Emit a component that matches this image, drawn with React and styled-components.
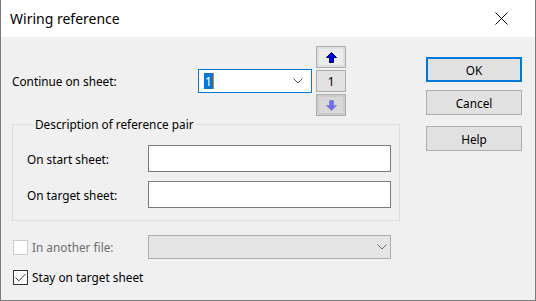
import React from "react";
import styled, { createGlobalStyle } from "styled-components";

const GlobalStyle = createGlobalStyle`
  html, body {
    margin: 0;
    padding: 0;
    background: #f0f0f0;
  }
  * {
    box-sizing: border-box;
  }
`;

const Window = styled.div`
  width: 536px;
  height: 301px;
  border: 1px solid #7a7a7a;
  border-top: none;
  display: flex;
  flex-direction: column;
  background: #f0f0f0;
  font-family: "Noto Sans", "Liberation Sans", sans-serif;
  font-size: 11.8px;
  color: #000;
`;

const TitleBar = styled.div`
  height: 37px;
  background: #fff;
  display: flex;
  align-items: center;
  justify-content: space-between;
  padding: 0 27px 0 9px;
  font-size: 14px;
  flex-shrink: 0;
`;

const CloseIcon = styled.svg`
  width: 13px;
  height: 13px;
`;

const Body = styled.div`
  flex: 1;
  display: flex;
  padding: 9px 13px 0 11px;
`;

const LeftColumn = styled.div`
  width: 388px;
  display: flex;
  flex-direction: column;
`;

const RightColumn = styled.div`
  margin-left: auto;
  padding-top: 11px;
  display: flex;
  flex-direction: column;
`;

const SheetRow = styled.div`
  display: flex;
  align-items: center;
  height: 70px;
`;

const Label = styled.span`
  width: ${(p) => p.width || "auto"};
  flex-shrink: 0;
  color: ${(p) => (p.disabled ? "#6d6d6d" : "#000")};
  white-space: nowrap;
`;

const Combo = styled.div`
  width: 114px;
  height: 24px;
  border: 1px solid #0078d7;
  background: #fff;
  display: flex;
  align-items: center;
  padding: 0 5px;
`;

const Selected = styled.span`
  background: #0078d7;
  color: #fff;
  line-height: 16px;
  padding: 0 1px;
  border-right: 1px solid #e07a1f;
`;

const Chevron = styled.svg`
  width: 10px;
  height: 6px;
  margin-left: auto;
  margin-right: 3px;
`;

const Spinner = styled.div`
  margin-left: 4px;
  display: flex;
  flex-direction: column;
  gap: 2px;
`;

const SpinButton = styled.div`
  width: 30px;
  height: 22px;
  border: 1px solid #adadad;
  display: flex;
  align-items: center;
  justify-content: center;
  background: ${(p) => (p.pressed ? "#d8d8d8" : "#ececec")};
  box-shadow: inset 0 0 0 2px ${(p) => (p.pressed ? "#cccccc" : "#dfdfdf")};
`;

const SpinValue = styled.div`
  width: 30px;
  height: 22px;
  border: 1px solid #adadad;
  background: #e1e1e1;
  display: flex;
  align-items: center;
  justify-content: center;
`;

const Group = styled.fieldset`
  margin: 0;
  width: 388px;
  border: 1px solid #dcdcdc;
  padding: 13px 8px 12px 14px;
  display: flex;
  flex-direction: column;
  gap: 9px;
`;

const Legend = styled.legend`
  padding: 0 2px;
  margin-left: 6px;
  line-height: 16px;
`;

const FieldRow = styled.div`
  display: flex;
  align-items: center;
`;

const TextInput = styled.div`
  margin-left: auto;
  width: 243px;
  height: 27px;
  border: 1px solid #7a7a7a;
  background: #fff;
`;

const OptionsArea = styled.div`
  margin-top: 14px;
  display: flex;
  flex-direction: column;
  gap: 10px;
`;

const OptionRow = styled.div`
  display: flex;
  align-items: center;
`;

const CheckBox = styled.div`
  width: 15px;
  height: 15px;
  margin: 0 4px 0 1px;
  border: 1px solid ${(p) => (p.disabled ? "#cccccc" : "#333333")};
  background: #fff;
  display: flex;
  align-items: center;
  justify-content: center;
  flex-shrink: 0;
`;

const DisabledCombo = styled.div`
  margin-left: auto;
  margin-right: 9px;
  width: 243px;
  height: 24px;
  border: 1px solid #adadad;
  background: #e5e5e5;
  display: flex;
  align-items: center;
`;

const Button = styled.div`
  width: 96px;
  height: 25px;
  margin-bottom: ${(p) => p.gap || 0}px;
  background: #e1e1e1;
  border: ${(p) => (p.primary ? "2px solid #0078d7" : "1px solid #adadad")};
  display: flex;
  align-items: center;
  justify-content: center;
`;

function ArrowIcon({ down, faded }) {
  return (
    <svg width="11" height="11" viewBox="0 0 11 11">
      <path
        d="M5.5 0.5 L10.5 5.5 L7.5 5.5 L7.5 10.5 L3.5 10.5 L3.5 5.5 L0.5 5.5 Z"
        fill={faded ? "#6b6bff" : "#0000ff"}
        stroke={faded ? "#8a8aa8" : "#000033"}
        strokeWidth="1"
        transform={down ? "rotate(180 5.5 5.5)" : undefined}
      />
    </svg>
  );
}

function ChevronDown({ color }) {
  return (
    <Chevron viewBox="0 0 10 6">
      <path d="M0.5 0.5 L5 5 L9.5 0.5" fill="none" stroke={color} strokeWidth="1" />
    </Chevron>
  );
}

export default function App() {
  return (
    <Window>
      <GlobalStyle />
      <TitleBar>
        <span>Wiring reference</span>
        <CloseIcon viewBox="0 0 13 13">
          <path d="M0.5 0.5 L12.5 12.5 M12.5 0.5 L0.5 12.5" stroke="#000" strokeWidth="1" />
        </CloseIcon>
      </TitleBar>
      <Body>
        <LeftColumn>
          <SheetRow>
            <Label width="186px">Continue on sheet:</Label>
            <Combo>
              <Selected>1</Selected>
              <ChevronDown color="#555" />
            </Combo>
            <Spinner>
              <SpinButton>
                <ArrowIcon />
              </SpinButton>
              <SpinValue>1</SpinValue>
              <SpinButton pressed>
                <ArrowIcon down faded />
              </SpinButton>
            </Spinner>
          </SheetRow>
          <Group>
            <Legend>Description of reference pair</Legend>
            <FieldRow>
              <Label>On start sheet:</Label>
              <TextInput />
            </FieldRow>
            <FieldRow>
              <Label>On target sheet:</Label>
              <TextInput />
            </FieldRow>
          </Group>
          <OptionsArea>
            <OptionRow>
              <CheckBox disabled />
              <Label disabled>In another file:</Label>
              <DisabledCombo>
                <ChevronDown color="#6d6d6d" />
              </DisabledCombo>
            </OptionRow>
            <OptionRow>
              <CheckBox>
                <svg width="11" height="9" viewBox="0 0 11 9">
                  <path d="M0.5 4.5 L3.8 7.8 L10.5 1" fill="none" stroke="#333" strokeWidth="1" />
                </svg>
              </CheckBox>
              <Label>Stay on target sheet</Label>
            </OptionRow>
          </OptionsArea>
        </LeftColumn>
        <RightColumn>
          <Button primary gap={8}>OK</Button>
          <Button gap={11}>Cancel</Button>
          <Button>Help</Button>
        </RightColumn>
      </Body>
    </Window>
  );
}
